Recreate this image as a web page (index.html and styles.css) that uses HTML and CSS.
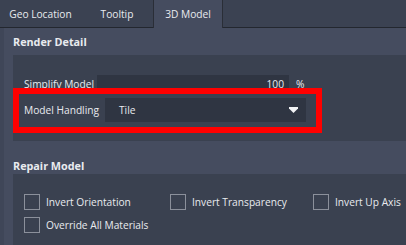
FILE: index.html
```html
<!DOCTYPE html>
<html>
<head>
<meta charset="utf-8">
<link rel="stylesheet" href="styles.css">
</head>
<body>
<div class="app">
  <div class="tabs">
    <div class="tab tab-geo">Geo Location</div>
    <div class="tab tab-tip">Tooltip</div>
    <div class="tab tab-model active">3D Model</div>
  </div>
  <div class="panel">
    <div class="section-title first">Render Detail</div>
    <div class="section-body render">
      <div class="row row-simplify">
        <span class="label">Simplify Model</span>
        <div class="field"><span class="value">100</span></div>
        <span class="unit">%</span>
      </div>
      <div class="row row-handling">
        <span class="label">Model Handling</span>
        <div class="select"><span>Tile</span>
          <svg class="arrow" width="9" height="6" viewBox="0 0 9 6"><path d="M0 0H9V1.5L4.5 6L0 1.5Z" fill="#f2f3f5"/></svg>
        </div>
      </div>
      <div class="highlight"></div>
    </div>
    <div class="section-title second">Repair Model</div>
    <div class="section-body repair">
      <div class="checks">
        <label class="check"><span class="box"></span>Invert Orientation</label>
        <label class="check"><span class="box"></span>Invert Transparency</label>
        <label class="check"><span class="box"></span>Invert Up Axis</label>
        <label class="check"><span class="box"></span>Override All Materials</label>
      </div>
    </div>
  </div>
</div>
</body>
</html>
```

FILE: styles.css
```css
html, body {
  margin: 0;
  padding: 0;
  width: 406px;
  height: 245px;
  overflow: hidden;
  background: #454c5f;
}
.app {
  width: 406px;
  height: 245px;
  display: flex;
  flex-direction: column;
  font-family: "Open Sans", "Noto Sans", sans-serif;
  font-size: 10.2px;
  color: #e9ebef;
}
.tabs {
  height: 27px;
  flex: none;
  display: flex;
  background: #3b4252;
  border-bottom: 1px solid #23272f;
}
.tab {
  display: flex;
  align-items: center;
  justify-content: center;
  height: 27px;
  box-sizing: border-box;
  white-space: nowrap;
}
.tab-geo { width: 81px; }
.tab-tip { width: 72px; }
.tab-model { width: 70px; }
.tab.active {
  background: #454c5f;
  border-left: 1px solid #2a2e37;
  border-right: 1px solid #2a2e37;
  height: 28px;
  margin-bottom: -1px;
}
.panel {
  flex: 1;
  display: flex;
  flex-direction: column;
  padding-left: 13px;
  box-shadow: inset 4px 0 0 #3f4658;
}
.section-title {
  font-weight: bold;
  font-size: 10.8px;
  display: flex;
  flex: none;
  white-space: nowrap;
}
.section-title.first { height: 27px; align-items: center; }
.section-title.second { height: 33px; padding-top: 17px; box-sizing: border-box; align-items: flex-start; }
.section-body {
  background: #3a4150;
  flex: none;
  position: relative;
}
.section-body.render {
  height: 86px;
  padding-left: 11px;
  box-sizing: border-box;
}
.section-body.repair {
  flex: 1;
  padding: 20px 0 0 11px;
}
.row {
  display: flex;
  align-items: center;
}
.label {
  flex: none;
  white-space: nowrap;
}
.row-simplify {
  padding-top: 20px;
  height: 18px;
}
.row-simplify .label { width: 73px; }
.field {
  flex: none;
  width: 192px;
  height: 18px;
  background: #2f3542;
  display: flex;
  align-items: center;
  justify-content: flex-end;
  padding-right: 5px;
  box-sizing: border-box;
}
.unit { margin-left: 7px; }
.row-handling {
  margin-top: 5px;
  height: 24px;
}
.row-handling .label { width: 81px; }
.select {
  flex: none;
  width: 201px;
  height: 24px;
  background: #2f3542;
  display: flex;
  align-items: center;
  justify-content: space-between;
  padding: 0 8px 0 14px;
  box-sizing: border-box;
}
.arrow { display: block; }
.highlight {
  position: absolute;
  left: 0;
  top: 33px;
  width: 309px;
  height: 45px;
  box-sizing: border-box;
  border: 6px solid #ff0000;
}
.checks {
  display: grid;
  grid-template-columns: 146px 143px auto;
  row-gap: 7px;
}
.check {
  display: flex;
  align-items: center;
  height: 16px;
  white-space: nowrap;
}
.box {
  width: 14px;
  height: 14px;
  border: 1px solid #8b909b;
  margin-right: 6px;
  flex: none;
}
```
